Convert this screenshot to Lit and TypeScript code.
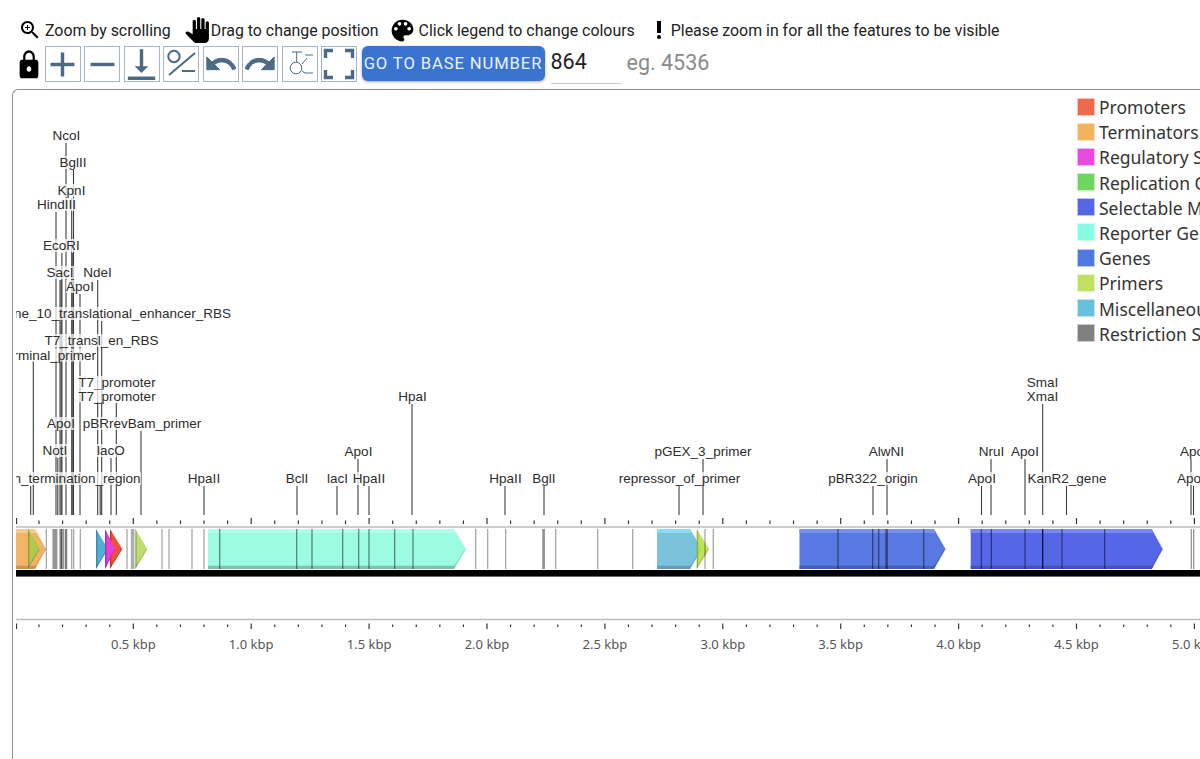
import { LitElement, html, css, svg } from "lit";
import { customElement } from "lit/decorators.js";

type Label = [string, number, number, number];
const LABELS: Label[] = [
  ["NcoI", 52, 81, 135.5], ["BglII", 59, 87, 162.5], ["KpnI", 57, 86, 190.5], ["HindIII", 37, 76, 204.5],
  ["EcoRI", 43, 80, 245.5], ["SacI", 46, 74, 272.5], ["NdeI", 83, 112, 272.5], ["ApoI", 66, 94, 286.5],
  ["gene_10_translational_enhancer_RBS", -1, 231, 313.5], ["T7_transl_en_RBS", 44, 159, 340.5],
  ["T7_terminal_primer", -21, 96, 355], ["T7_promoter", 78, 156, 382.5], ["T7_promoter", 78, 156, 396],
  ["ApoI", 47, 75, 423.5], ["pBRrevBam_primer", 82, 202, 423.5], ["NotI", 43, 67, 450.5], ["lacO", 97, 125, 450.5],
  ["transcription_termination_region", -53, 141, 478.5], ["HpaII", 188, 220, 478.5], ["BclI", 285, 309, 478.5],
  ["lacI", 327, 348, 478.5], ["HpaII", 353, 385, 478.5], ["ApoI", 344, 373, 451.5], ["HpaI", 398, 427, 396.5],
  ["HpaII", 489, 522, 478.5], ["BglI", 532, 556, 478.5], ["repressor_of_primer", 618, 741, 478.5],
  ["pGEX_3_primer", 654, 752, 451.5], ["AlwNI", 869, 904, 451.5], ["pBR322_origin", 828, 918, 478.5],
  ["ApoI", 968, 996, 478.5], ["NruI", 979, 1004, 451.5], ["ApoI", 1011, 1039, 451.5], ["KanR2_gene", 1027, 1107, 478.5],
  ["SmaI", 1027, 1058, 382.5], ["XmaI", 1027, 1058, 396.5], ["ApoI", 1180, 1208, 451.5], ["ApoI", 1177, 1205, 478.5],
];
const LINES: [number, number][] = [
  [30.7, 486], [33.3, 361], [56, 212], [57.8, 458], [60, 280], [61.2, 280], [61.9, 253], [66, 143], [71.7, 198],
  [72.8, 253], [73.5, 170], [80, 294], [97.7, 280], [100.2, 486], [101.7, 321], [111, 458], [116.3, 403], [141, 431],
  [204, 486], [297, 486], [337, 486], [358, 459], [369, 486], [412, 404], [505, 486], [544, 486], [679, 486], [703, 459],
  [873, 486], [887, 459], [981.5, 486], [991, 459], [1025, 459], [1042.7, 404], [1066.5, 486], [1191, 459], [1193.5, 486],
];
const CUTS: [number, number?, number?][] = [
  [46.3], [54.9, 0.42, 5], [60.4, 0.42, 2], [61.6, 0.6, 1.5], [63.3, 0.42, 1.5], [66, 0.5, 2.5], [71.7], [73.7], [80.3], [127],
  [132.6, 0.32, 3.6], [162], [169], [192], [204], [219.7, 0.5], [296.7, 0.5], [312, 0.5], [342.7, 0.5], [358.7, 0.5],
  [369, 0.5], [394.7, 0.5], [413, 0.5], [475.7], [487.7], [505.7], [543, 0.5], [544.2, 0.5], [555.7], [597.7], [632.7], [705], [713.3],
  [838, 0.5], [872.7, 0.5], [878.7, 0.5], [886, 0.5], [887.2, 0.5], [923.7, 0.5], [981.3, 0.5], [991.3, 0.5], [1025, 0.5], [1042.7, 0.9],
  [1062, 0.5], [1104.7, 0.5], [1191.3, 0.45], [1193.7, 0.45],
];
type Arrow = [string, number, number, number, string, string, string];
const ARROWS: Arrow[] = [
  ["a", 16, 35, 46, "#f2b268", "#f6c994", "#c9935a"],
  ["a", 208, 454, 466, "#9bfbe3", "#b5fded", "#7dc2b0"],
  ["a", 657, 690, 702, "#7bc2dc", "#8adcf5", "#649db3"],
  ["a", 799.5, 934, 945.5, "#5878e2", "#7a93ea", "#4660b5"],
  ["a", 970.7, 1151.7, 1162.7, "#5566e6", "#7a87ec", "#4552b8"],
];
const TRIS: [number, number, string][] = [
  [28, 40, "rgba(165,205,70,.85)"], [96, 108, "#4fb0d6"], [110, 122.3, "#ee5136"], [105, 115.5, "#e63fd6"],
  [135.3, 147.3, "#bddd6e"], [696.7, 709, "rgba(180,225,70,.9)"],
];
const LEGEND: [string, string][] = [
  ["#ef6a4c", "Promoters"], ["#f2b25e", "Terminators"], ["#e84ae0", "Regulatory Sequences"],
  ["#6ed65c", "Replication Origins"], ["#5565e6", "Selectable Markers"], ["#86fce2", "Reporter Genes"],
  ["#4f78e0", "Genes"], ["#bfe060", "Primers"], ["#66c0dc", "Miscellaneous"], ["#808080", "Restriction Sites"],
];
const X0 = 15.4;
const STEP = 23.58;

const icon = (d: string, extra = "") => html`<svg viewBox="0 0 24 24" class="ic ${extra}"><path d=${d}></path></svg>`;

@customElement("app-root")
export class AppRoot extends LitElement {
  static styles = css`
    :host { display: block; width: 1200px; height: 759px; overflow: hidden; background: #fff; font-family: Roboto, "Liberation Sans", sans-serif; }
    .hints { display: flex; align-items: center; height: 24px; padding: 18px 0 0 18px; font-size: 15.9px; color: #222; }
    .hint { display: flex; align-items: center; gap: 3px; white-space: nowrap; }
    .h1 { margin-right: 13px; }
    .h2 { margin-right: 9px; gap: 1px; }
    .h3 { margin-right: 12px; gap: 2px; }
    .h4 { gap: 0; }
    .hints svg { fill: #000; display: block; flex: none; }
    .s24 { width: 24px; height: 24px; }
    .hand { width: 26px; height: 26px; }
    .pal { width: 29px; height: 29px; }
    .tools { display: flex; align-items: center; height: 36px; margin-top: 4px; padding-left: 14.5px; }
    .lock { width: 28px; height: 32px; fill: #000; margin: 1px 2px 0 0; }
    .btn { box-sizing: border-box; width: 36px; height: 36px; border: 1.4px solid #a7b6c6; margin-right: 3.5px; display: flex; align-items: center; justify-content: center; }
    .btn svg { width: 34px; height: 34px; fill: #4c6a86; display: block; flex: none; }
    .btn svg.big { width: 41px; height: 41px; }
    .btn svg.thick path { stroke: #4c6a86; stroke-width: .7; }
    .btn svg.line { fill: none; stroke: #4c6a86; }
    .go { box-sizing: border-box; width: 183px; height: 35px; margin: -1px 0 0 1px; background: #3b74cf; color: #eaf1fb; border-radius: 6px; font-size: 16.6px; letter-spacing: .9px; display: flex; align-items: center; justify-content: center; white-space: nowrap; box-shadow: 0 1px 3px rgba(0,0,0,.35); }
    .num { box-sizing: border-box; align-self: flex-start; flex: none; width: 70px; height: 38px; margin: 0 6px; border-bottom: 1px solid #c8c8c8; font-size: 21.5px; line-height: 32px; color: #222; }
    .eg { font-size: 21.5px; color: #8a8a8a; margin-top: -3px; }
    .panel { position: relative; box-sizing: border-box; height: 670px; margin: 7px 0 0 12px; padding-left: 3px; border-left: 1px solid #8f8f8f; border-top: 1px solid #8f8f8f; border-top-left-radius: 6px; overflow: hidden; }
    .map { display: block; width: 1184px; height: 669px; }
    .map text { font-family: "Liberation Sans", Arial, sans-serif; font-size: 13.5px; fill: #2c2c2c; dominant-baseline: central; text-anchor: middle; }
    .map text.axis { font-family: "Noto Sans", sans-serif; font-size: 13px; fill: #555; }
    .legend { position: absolute; left: 1064px; top: 8px; display: flex; flex-direction: column; gap: 8.2px; white-space: nowrap; font-family: "Noto Sans", sans-serif; font-size: 17.5px; line-height: 17px; color: #333; }
    .lg { display: flex; align-items: center; gap: 4px; height: 17px; }
    .lg .t { padding-top: 2px; }
    .sw { width: 16px; height: 16px; border: .5px solid rgba(255,255,255,.6); }
  `;

  renderMap() {
    const ticks = [];
    for (let i = 0; i <= 50; i++) {
      const x = i === 0 ? 16.5 : X0 + STEP * i;
      const major = i % 5 === 0;
      ticks.push(svg`<line x1=${x} x2=${x} y1=${major ? 518 : 520.5} y2="524" stroke="#333" stroke-width="1.2"></line>`);
      ticks.push(svg`<line x1=${x} x2=${x} y1=${major ? 623.5 : 624.5} y2=${major ? 629 : 627} stroke="#333" stroke-width="1.2"></line>`);
      if (major && i > 0) ticks.push(svg`<text class="axis" x=${x} y="643.5">${(i / 10).toFixed(1)} kbp</text>`);
    }
    return html`<svg class="map" viewBox="16 90 1184 669">
      <line x1="16" x2="1200" y1="527" y2="527" stroke="#bcbcbc" stroke-width="1.4"></line>
      <line x1="16" x2="1200" y1="619.5" y2="619.5" stroke="#bcbcbc" stroke-width="1.4"></line>
      ${ticks}
      ${ARROWS.map(([, a, s, t, c, hi, lo]) => svg`
        <polygon points="${a},529 ${s},529 ${t},549 ${s},569 ${a},569" fill=${c}></polygon>
        <polygon points="${a},529 ${s},529 ${s + 2.2},533 ${a},533" fill=${hi}></polygon>
        <polygon points="${a},565.8 ${s + 1.8},565.8 ${s},569 ${a},569" fill=${lo}></polygon>
        <polygon points="${s},569 ${t},549 ${t - 1},549 ${s - 1},567" fill=${lo} opacity=".5"></polygon>`)}
      ${TRIS.map(([a, t, c]) => svg`
        <polygon points="${a},529 ${t},549 ${a},569" fill=${c}></polygon>
        <polygon points="${a},529 ${a + 1.4},531.4 ${a + 1.4},566.6 ${a},569" fill="#000" opacity=".22"></polygon>
        <polygon points="${a},569 ${t},549 ${t - 1.2},549 ${a},566.5" fill="#000" opacity=".14"></polygon>`)}
      ${CUTS.map(([x, o, w]) => svg`<line x1=${x} x2=${x} y1="529" y2="569" stroke="#000" stroke-opacity=${o ?? 0.38} stroke-width=${w ?? 1.2}></line>`)}
      <rect x="16" y="570" width="1184" height="6.6" fill="#000"></rect>
      ${LINES.map(([x, t]) => svg`<line x1=${x} x2=${x} y1=${t} y2="515" stroke="#3c3c3c" stroke-width="1.1"></line>`)}
      ${LABELS.map(([s, a, b, y]) => svg`
        <rect x=${a} y=${y - 6.5} width=${b - a} height="13" fill="#fff" fill-opacity=".72"></rect>
        <text x=${(a + b) / 2} y=${y}>${s}</text>`)}
    </svg>`;
  }

  render() {
    return html`
      <div class="hints">
        <div class="hint h1">${icon("M15.5 14h-.79l-.28-.27C15.41 12.59 16 11.11 16 9.5 16 5.91 13.09 3 9.5 3S3 5.91 3 9.5 5.91 16 9.5 16c1.61 0 3.09-.59 4.23-1.57l.27.28v.79l5 4.99L20.49 19l-4.99-5zm-6 0C7.01 14 5 11.99 5 9.5S7.01 5 9.5 5 14 7.01 14 9.5 11.99 14 9.5 14zM12 10h-2v2H9v-2H7V9h2V7h1v2h2v1z", "s24")}<span>Zoom by scrolling</span></div>
        <div class="hint h2">${icon("M23 5.5V20c0 2.2-1.8 4-4 4h-7.3c-1.08 0-2.1-.43-2.85-1.19L1 14.83s1.26-1.23 1.3-1.25c.22-.19.49-.29.79-.29.22 0 .42.06.6.16.04.01 4.31 2.46 4.31 2.46V4c0-.83.67-1.5 1.5-1.5S11 3.17 11 4v7h1V1.5c0-.83.67-1.5 1.5-1.5S15 .67 15 1.5V11h1V2.5c0-.83.67-1.5 1.5-1.5s1.5.67 1.5 1.5V11h1V5.5c0-.83.67-1.5 1.5-1.5s1.5.67 1.5 1.5z", "hand")}<span>Drag to change position</span></div>
        <div class="hint h3">${icon("M12 3c-4.97 0-9 4.03-9 9s4.03 9 9 9c.83 0 1.5-.67 1.5-1.5 0-.39-.15-.74-.39-1.01-.23-.26-.38-.61-.38-.99 0-.83.67-1.5 1.5-1.5H16c2.76 0 5-2.24 5-5 0-4.42-4.03-8-9-8zm-5.5 9c-.83 0-1.5-.67-1.5-1.5S5.67 9 6.5 9 8 9.67 8 10.5 7.33 12 6.5 12zm3-4C8.67 8 8 7.33 8 6.5S8.67 5 9.5 5s1.5.67 1.5 1.5S10.33 8 9.5 8zm5 0c-.83 0-1.5-.67-1.5-1.5S13.67 5 14.5 5s1.5.67 1.5 1.5S15.33 8 14.5 8zm3 4c-.83 0-1.5-.67-1.5-1.5S16.67 9 17.5 9s1.5.67 1.5 1.5-.67 1.5-1.5 1.5z", "pal")}<span>Click legend to change colours</span></div>
        <div class="hint h4">${icon("M10 3h4v12h-4zM14 19a2 2 0 1 1-4 0a2 2 0 0 1 4 0z", "s24")}<span>Please zoom in for all the features to be visible</span></div>
      </div>
      <div class="tools">
        <svg viewBox="0 0 24 24" class="lock" preserveAspectRatio="none"><path d="M18 8h-1V6c0-2.76-2.24-5-5-5S7 3.24 7 6v2H6c-1.1 0-2 .9-2 2v10c0 1.1.9 2 2 2h12c1.1 0 2-.9 2-2V10c0-1.1-.9-2-2-2zm-6 9c-1.1 0-2-.9-2-2s.9-2 2-2 2 .9 2 2-.9 2-2 2zm3.1-9H8.9V6c0-1.71 1.39-3.1 3.1-3.1 1.71 0 3.1 1.39 3.1 3.1v2z"></path></svg>
        <div class="btn">${icon("M19 13h-6v6h-2v-6H5v-2h6V5h2v6h6v2z", "big")}</div>
        <div class="btn">${icon("M19 13H5v-2h14v2z", "big")}</div>
        <div class="btn">${icon("M16 13h-3V3h-2v10H8l4 4 4-4zM4 19v2h16v-2H4z", "big")}</div>
        <div class="btn"><svg viewBox="0 0 34 34" class="line" stroke-width="2"><circle cx="10" cy="9.5" r="5.7"></circle><path d="M31 6 5 28M18 24h13"></path></svg></div>
        <div class="btn">${icon("M12.5 8c-2.65 0-5.05.99-6.9 2.6L2 7v9h9l-3.62-3.62c1.39-1.16 3.16-1.88 5.12-1.88 3.54 0 6.55 2.31 7.6 5.5l2.37-.78C21.08 11.03 17.15 8 12.5 8z", "thick")}</div>
        <div class="btn">${icon("M18.4 10.6C16.55 8.99 14.15 8 11.5 8c-4.65 0-8.58 3.03-9.96 7.22L3.9 16c1.05-3.19 4.05-5.5 7.6-5.5 1.95 0 3.73.72 5.12 1.88L13 16h9V7l-3.6 3.6z", "thick")}</div>
        <div class="btn"><svg viewBox="0 0 34 34" class="line" stroke-width="1"><circle cx="13" cy="21" r="5.8"></circle><path d="M9 5h10M13.7 5v10M22 8h8M19 17l5-6M22 26h8M19 24l3 2"></path></svg></div>
        <div class="btn"><svg viewBox="0 0 34 34" class="line" stroke-width="3.4"><path d="M3.5 11V3.5H11M23 3.5h7.5V11M30.5 23v7.5H23M11 30.5H3.5V23"></path></svg></div>
        <div class="go">GO TO BASE NUMBER</div>
        <div class="num">864</div>
        <div class="eg">eg. 4536</div>
      </div>
      <div class="panel">
        ${this.renderMap()}
        <div class="legend">
          ${LEGEND.map(([c, t]) => html`<div class="lg"><span class="sw" style="background:${c}"></span><span class="t">${t}</span></div>`)}
        </div>
      </div>`;
  }
}
